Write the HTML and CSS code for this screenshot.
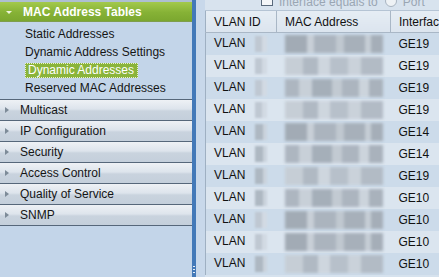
FILE: index.html
```html
<!DOCTYPE html>
<html>
<head>
<meta charset="utf-8">
<link rel="stylesheet" href="styles.css">
</head>
<body>
<div class="page">
  <nav class="sidebar">
    <div class="group-head"><span class="caret-down"></span>MAC Address Tables</div>
    <ul class="submenu">
      <li>Static Addresses</li>
      <li>Dynamic Address Settings</li>
      <li><span class="current">Dynamic Addresses</span></li>
      <li>Reserved MAC Addresses</li>
    </ul>
    <ul class="menu">
      <li><span class="caret-right"></span>Multicast</li>
      <li><span class="caret-right"></span>IP Configuration</li>
      <li><span class="caret-right"></span>Security</li>
      <li><span class="caret-right"></span>Access Control</li>
      <li><span class="caret-right"></span>Quality of Service</li>
      <li><span class="caret-right"></span>SNMP</li>
    </ul>
  </nav>
  <div class="splitter"><span class="grip"></span></div>
  <div class="gutter"></div>
  <main class="content">
    <div class="filter">
      <span class="checkbox"></span>
      <span class="filter-label">Interface equals to</span>
      <span class="radio"></span>
      <span class="filter-label">Port</span>
    </div>
    <table class="grid">
      <thead>
        <tr><th class="c1">VLAN ID</th><th class="c2">MAC Address</th><th class="c3">Interface</th></tr>
      </thead>
      <tbody>
        <tr><td>VLAN <span class="blur-id"></span></td><td><span class="blur-mac m1"></span></td><td>GE19</td></tr>
        <tr><td>VLAN <span class="blur-id"></span></td><td><span class="blur-mac m2"></span></td><td>GE19</td></tr>
        <tr><td>VLAN <span class="blur-id"></span></td><td><span class="blur-mac m3"></span></td><td>GE19</td></tr>
        <tr><td>VLAN <span class="blur-id"></span></td><td><span class="blur-mac m2"></span></td><td>GE19</td></tr>
        <tr><td>VLAN <span class="blur-id dark"></span></td><td><span class="blur-mac m1"></span></td><td>GE14</td></tr>
        <tr><td>VLAN <span class="blur-id dark"></span></td><td><span class="blur-mac m3"></span></td><td>GE14</td></tr>
        <tr><td>VLAN <span class="blur-id dark"></span></td><td><span class="blur-mac m2"></span></td><td>GE19</td></tr>
        <tr><td>VLAN <span class="blur-id dark"></span></td><td><span class="blur-mac m3"></span></td><td>GE10</td></tr>
        <tr><td>VLAN <span class="blur-id"></span></td><td><span class="blur-mac m1"></span></td><td>GE10</td></tr>
        <tr><td>VLAN <span class="blur-id"></span></td><td><span class="blur-mac m1"></span></td><td>GE10</td></tr>
        <tr><td>VLAN <span class="blur-id dark"></span></td><td><span class="blur-mac m2"></span></td><td>GE10</td></tr>
      </tbody>
    </table>
  </main>
</div>
</body>
</html>
```

FILE: styles.css
```css
html, body {
  margin: 0;
  padding: 0;
}
body {
  font-family: "Liberation Sans", Arial, sans-serif;
  font-size: 12px;
  color: #111;
  background: #d6e2ee;
  overflow: hidden;
}
.page {
  display: flex;
  height: 277px;
  width: 439px;
  overflow: hidden;
}
.sidebar {
  width: 192px;
  flex: none;
  background: #c3d5e9;
  border-top: 2px solid #aebfd2;
  box-sizing: border-box;
}
.group-head {
  height: 20px;
  line-height: 20px;
  background: linear-gradient(#a3c94c, #86b236 55%, #7ba72f);
  color: #fff;
  font-weight: bold;
  display: flex;
  align-items: center;
  border-bottom: 1px solid #7f9e4c;
  box-sizing: border-box;
}
.caret-down {
  width: 0;
  height: 0;
  border-left: 3px solid transparent;
  border-right: 3px solid transparent;
  border-top: 3px solid #eef5dc;
  margin: 2px 11px 0 6px;
}
.submenu {
  list-style: none;
  margin: 0;
  padding: 3px 0 2px 0;
}
.submenu li {
  height: 18px;
  line-height: 18px;
  padding-left: 25px;
  color: #151515;
}
.current {
  display: inline-block;
  background: #8ab43a;
  color: #fff;
  line-height: 15px;
  padding: 0 4px 0 3px;
  outline: 1px dotted #e8f0d0;
  outline-offset: -1px;
}
.menu {
  list-style: none;
  margin: 0;
  padding: 0;
  border-bottom: 1px solid #56677a;
}
.menu li {
  height: 20px;
  line-height: 20px;
  border-top: 1px solid #56677a;
  background: linear-gradient(#eef1f5, #dde4ec 45%, #c9d3de 55%, #c4cfdb);
  display: flex;
  align-items: center;
  color: #151515;
}
.caret-right {
  width: 0;
  height: 0;
  border-top: 3px solid transparent;
  border-bottom: 3px solid transparent;
  border-left: 4px solid #7d8b98;
  margin: 0 11px 0 5px;
}
.splitter {
  width: 4px;
  flex: none;
  background: #4379b8;
  display: flex;
  flex-direction: column;
  justify-content: flex-end;
  align-items: center;
}
.grip {
  width: 2px;
  height: 8px;
  margin-bottom: 3px;
  background: repeating-linear-gradient(#e8f0f8 0 1px, transparent 1px 3px);
}
.gutter {
  width: 9px;
  flex: none;
  background: #c8d8ea;
}
.content {
  flex: 1;
  min-width: 0;
  display: flex;
  flex-direction: column;
  background: #d6e2ee;
}
.filter {
  height: 11px;
  overflow: hidden;
  display: flex;
  align-items: flex-end;
  background: #d8e3ee;
  color: #9aa6b3;
  font-size: 12px;
  line-height: 14px;
  border-bottom: 1px solid #b5c4d4;
  box-sizing: border-box;
}
.checkbox {
  width: 10px;
  height: 10px;
  border: 1px solid #5a6a7c;
  background: #f4f6f8;
  margin: 0 6px 4px 56px;
  flex: none;
}
.filter-label {
  flex: none;
  white-space: nowrap;
  margin-bottom: 1px;
}
.radio {
  width: 10px;
  height: 10px;
  border: 1px solid #a8b4c0;
  border-radius: 50%;
  background: #eef2f5;
  margin: 0 6px 3px 7px;
  flex: none;
}
.grid {
  border-collapse: collapse;
  table-layout: fixed;
  width: 260px;
  border-left: 1px solid #9fb0c2;
}
.grid th, .grid td {
  padding: 0 0 0 8px;
  text-align: left;
  white-space: nowrap;
  overflow: hidden;
}
.grid th {
  height: 21px;
  font-weight: normal;
  background: linear-gradient(#e6edf4, #dbe4ee);
  border-bottom: 1px solid #a9b7c6;
  border-right: 1px solid #a9b7c6;
}
.grid .c1 { width: 62px; }
.grid .c2 { width: 105px; }
.grid .c3 { width: 80px; border-right: none; }
.grid td {
  height: 22px;
  background: #ccdbea;
}
.grid tbody tr:nth-child(even) td {
  background: #dbe5ef;
}
.blur-id {
  display: inline-block;
  width: 12px;
  height: 16px;
  vertical-align: middle;
  margin-left: 6px;
  background: linear-gradient(90deg, #bfc8d2 0 60%, #d2dae3 60%);
  filter: blur(1.2px);
}
.blur-id.dark {
  background: linear-gradient(90deg, #aeb8c2 0 70%, #cad3dc 70%);
}
.blur-mac {
  display: inline-block;
  width: 98px;
  height: 18px;
  vertical-align: middle;
  filter: blur(1.5px);
}
.m1 {
  background: linear-gradient(90deg, #a2abb5 0 22%, #c8cfd7 22% 30%, #abb4be 30% 52%, #c0c8d0 52% 60%, #a7b0ba 60% 82%, #c5cdd5 82% 88%, #a5aeb8 88%);
}
.m2 {
  background: linear-gradient(90deg, #c6ced6 0 18%, #b0b9c3 18% 34%, #ced6de 34% 46%, #b7c0ca 46% 64%, #cad2da 64% 78%, #b2bbc5 78%);
}
.m3 {
  background: linear-gradient(90deg, #adb6c0 0 14%, #c8d0d8 14% 28%, #a5afb9 28% 48%, #c2cad2 48% 58%, #acb5bf 58% 76%, #ccd4dc 76% 86%, #a9b2bc 86%);
}
```
